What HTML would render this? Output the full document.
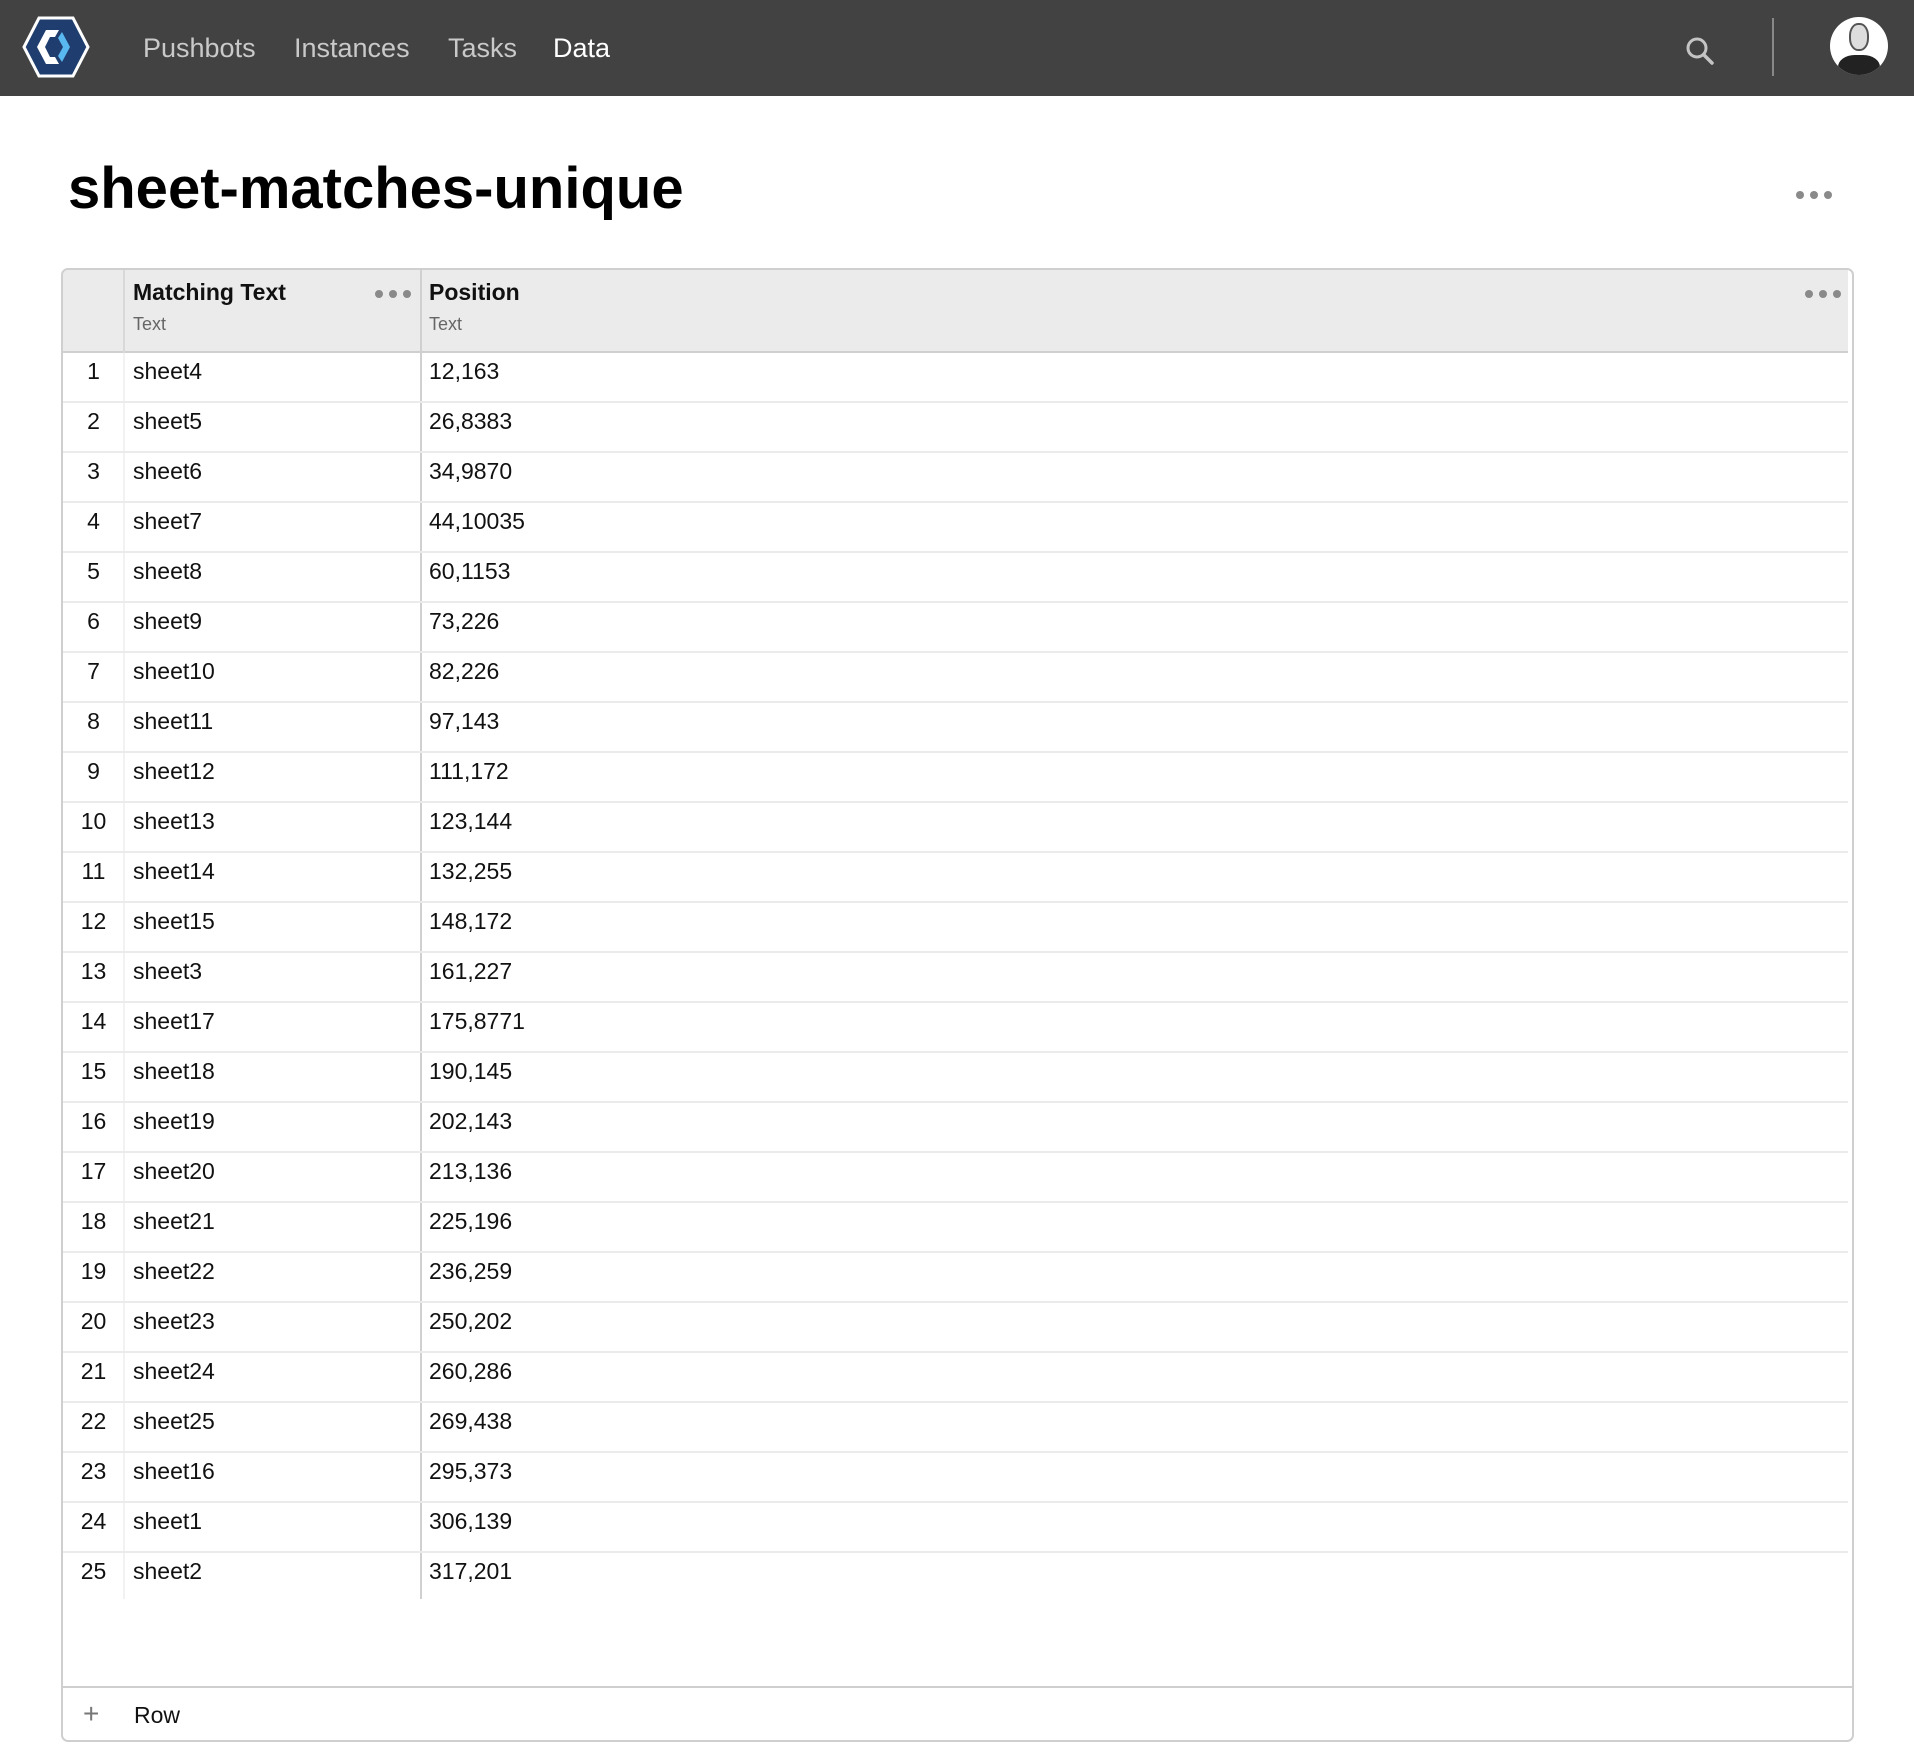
<!DOCTYPE html>
<html><head><meta charset="utf-8"><style>
*{margin:0;padding:0;box-sizing:border-box}
body{width:1914px;height:1754px;background:#fff;font-family:"Liberation Sans",Arial,sans-serif;position:relative;overflow:hidden;color:#111}
.nav{position:absolute;left:0;top:0;width:1914px;height:96px;background:#424242}
.nav a{position:absolute;top:30px;font-size:27px;color:#c9c9c9;line-height:36px}
.dots{position:absolute;display:flex;gap:6px}
.dots i{display:block;width:8px;height:8px;border-radius:50%;background:#8a8a8a}
.tbl{position:absolute;left:61px;top:268px;width:1793px;height:1474px;border:2px solid #cfcfcf;border-radius:7px;overflow:hidden}
.hdr{position:absolute;left:0;top:0;width:1785px;height:83px;background:#ebebeb;border-bottom:2px solid #cfcfcf}
.row{position:absolute;left:0;width:1785px;height:50px;border-bottom:2px solid #ebebeb;font-size:23px;line-height:36px}
.row .n{position:absolute;left:0;width:61px;text-align:center;top:0}
.row .a{position:absolute;left:70px;top:0}
.row .b{position:absolute;left:366px;top:0}
.vl{position:absolute;width:2px;background:#d0d0d0}
</style></head><body>
<div class="nav">
<svg style="position:absolute;left:22px;top:16px" width="68" height="62" viewBox="0 0 68 62">
<polygon points="17,2 51,2 66,31 51,60 17,60 2,31" fill="#1f3d6e" stroke="#fff" stroke-width="3"/>
<path d="M37,14 H24 L15,31 L24,48 H37 L33,41 H28 L23,31 L28,21 H33 Z" fill="#fff"/>
<path d="M40,16 L48,31 L40,46 L36,40 L41,31 L36,22 Z" fill="#5ab8f0"/>
</svg>
<a style="left:143px">Pushbots</a>
<a style="left:294px">Instances</a>
<a style="left:448px">Tasks</a>
<a style="left:553px;color:#fff">Data</a>
<svg style="position:absolute;left:1684px;top:35px" width="32" height="32" viewBox="0 0 32 32"><circle cx="13" cy="13" r="9" fill="none" stroke="#c4c4c4" stroke-width="3"/><path d="M20 20 L28 28" stroke="#c4c4c4" stroke-width="3.5" stroke-linecap="round"/></svg>
<div style="position:absolute;left:1772px;top:18px;width:2px;height:58px;background:#888"></div>
<div style="position:absolute;left:1830px;top:17px;width:58px;height:58px;border-radius:50%;background:#fff;overflow:hidden">
<div style="position:absolute;left:19px;top:6px;width:20px;height:28px;border-radius:45%;background:#ddd;border:2px solid #555"></div>
<div style="position:absolute;left:8px;top:38px;width:42px;height:30px;border-radius:40% 40% 0 0;background:#222"></div>
</div>
</div>
<div style="position:absolute;left:68px;top:154px;font-size:58px;font-weight:bold;line-height:70px;color:#000">sheet-matches-unique</div>
<div class="dots" style="left:1796px;top:191px"><i></i><i></i><i></i></div>
<div class="tbl">
<div class="hdr">
<div style="position:absolute;left:70px;top:9px;font-size:23px;font-weight:bold">Matching Text</div>
<div style="position:absolute;left:70px;top:44px;font-size:18px;color:#666">Text</div>
<div style="position:absolute;left:366px;top:9px;font-size:23px;font-weight:bold">Position</div>
<div style="position:absolute;left:366px;top:44px;font-size:18px;color:#666">Text</div>
<div class="dots" style="left:312px;top:20px"><i></i><i></i><i></i></div>
<div class="dots" style="left:1742px;top:20px"><i></i><i></i><i></i></div>
</div>
<div class="vl" style="left:60px;top:0;height:83px;background:#d8d8d8"></div>
<div class="vl" style="left:357px;top:0;height:1329px"></div>
<div class="vl" style="left:60px;top:83px;height:1246px;background:#f2f2f2"></div>
<div id="rows"></div>
<div style="position:absolute;left:0;top:1416px;width:1793px;height:2px;background:#cfcfcf"></div>
<div style="position:absolute;left:20px;top:1424px;font-size:28px;color:#777;line-height:40px">+</div>
<div style="position:absolute;left:71px;top:1428px;font-size:23px;line-height:34px">Row</div>
</div>
<script>
var d=[["sheet4","12,163"],["sheet5","26,8383"],["sheet6","34,9870"],["sheet7","44,10035"],["sheet8","60,1153"],["sheet9","73,226"],["sheet10","82,226"],["sheet11","97,143"],["sheet12","111,172"],["sheet13","123,144"],["sheet14","132,255"],["sheet15","148,172"],["sheet3","161,227"],["sheet17","175,8771"],["sheet18","190,145"],["sheet19","202,143"],["sheet20","213,136"],["sheet21","225,196"],["sheet22","236,259"],["sheet23","250,202"],["sheet24","260,286"],["sheet25","269,438"],["sheet16","295,373"],["sheet1","306,139"],["sheet2","317,201"]];
var h="";for(var i=0;i<d.length;i++){var t=83+i*50;h+='<div class="row" style="top:'+t+'px;'+(i==24?'border-bottom:none':'')+'"><span class="n">'+(i+1)+'</span><span class="a">'+d[i][0]+'</span><span class="b">'+d[i][1]+'</span></div>';}
document.getElementById("rows").outerHTML=h;
</script>
</body></html>
